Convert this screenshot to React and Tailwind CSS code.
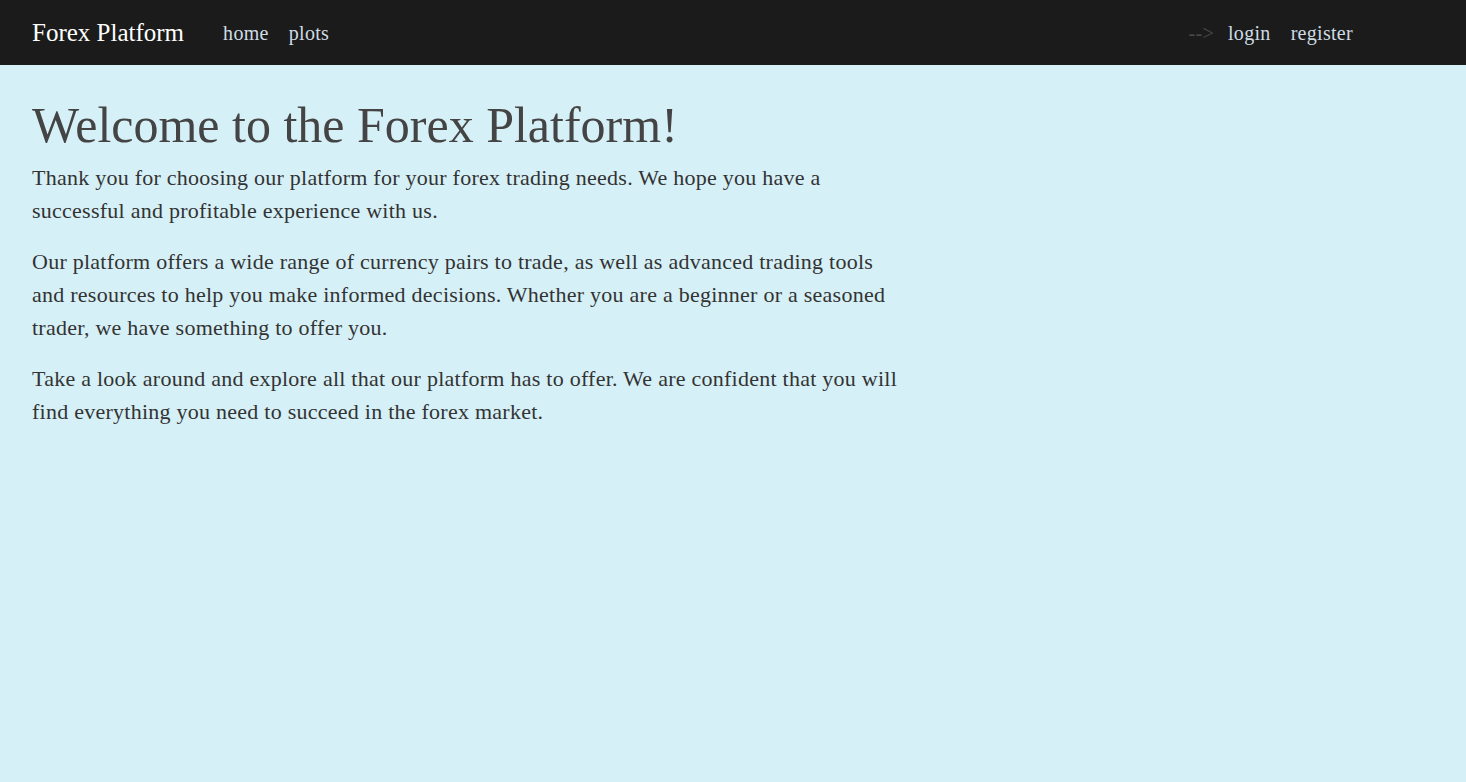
export default function App() {
  const serif = { fontFamily: '"Liberation Serif", "DejaVu Serif", serif' };
  return (
    <div className="min-h-screen bg-[#d6f0f7]" style={serif}>
      <nav className="h-[65px] bg-[#1b1b1b] flex items-center px-8">
        <div className="text-[25px] text-white">Forex Platform</div>
        <div className="flex gap-5 ml-[39px] text-[20px] text-[#cfdbe3] tracking-[0.3px]">
          <a>home</a>
          <a>plots</a>
        </div>
        <div className="ml-auto mr-[81px] flex items-center text-[20px] tracking-[0.3px]">
          <span className="text-[#4a4a4a] mr-[14px]">--&gt;</span>
          <a className="text-[#cfdbe3]">login</a>
          <a className="text-[#cfdbe3] ml-5">register</a>
        </div>
      </nav>
      <main className="px-8 pt-[30px] text-[#333]">
        <h1 className="text-[50px] leading-[60px] text-[#444] mb-[6px]">Welcome to the Forex Platform!</h1>
        <p className="text-[22px] leading-[33px] mb-[18px] tracking-[0.25px]">
          Thank you for choosing our platform for your forex trading needs. We hope you have a<br />
          successful and profitable experience with us.
        </p>
        <p className="text-[22px] leading-[33px] mb-[18px] tracking-[0.25px]">
          Our platform offers a wide range of currency pairs to trade, as well as advanced trading tools<br />
          and resources to help you make informed decisions. Whether you are a beginner or a seasoned<br />
          trader, we have something to offer you.
        </p>
        <p className="text-[22px] leading-[33px] tracking-[0.25px]">
          Take a look around and explore all that our platform has to offer. We are confident that you will<br />
          find everything you need to succeed in the forex market.
        </p>
      </main>
    </div>
  );
}
